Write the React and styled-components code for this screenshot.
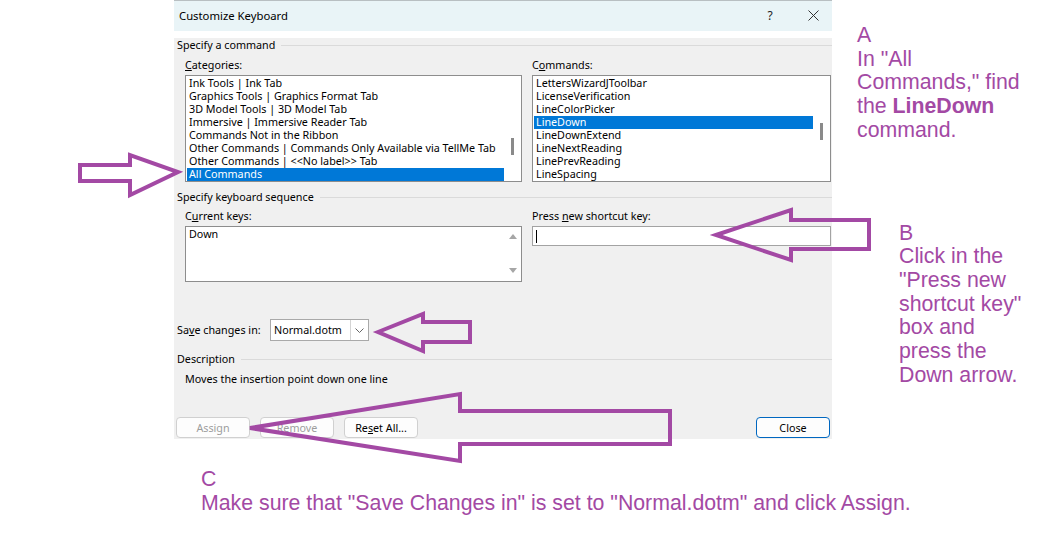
import React from "react";
import styled, { createGlobalStyle } from "styled-components";

const PURPLE = "#a349a4";

const GlobalStyle = createGlobalStyle`
  html, body {
    margin: 0;
    padding: 0;
    background: #fff;
  }
  body {
    font-family: "Noto Sans", "DejaVu Sans", sans-serif;
  }
`;

const Page = styled.div`
  position: relative;
  width: 1051px;
  height: 537px;
  overflow: hidden;
  background: #fff;
`;

const TopRow = styled.div`
  display: grid;
  grid-template-columns: 174px 658px 1fr;
`;

const Dialog = styled.div`
  grid-column: 2;
  font-size: 10.75px;
  color: #000;
  line-height: 14px;
`;

const TitleBar = styled.div`
  height: 31px;
  background: #e9f4f7;
  box-shadow: inset 0 1px 0 #b8bfc2;
  display: flex;
  align-items: center;
  padding-left: 5px;
  font-size: 11.3px;
`;

const Title = styled.span`
  flex: 1;
`;

const TitleButton = styled.span`
  width: 38px;
  height: 31px;
  display: flex;
  align-items: center;
  justify-content: center;
  font-size: 12px;
  color: #222;
  & + & {
    margin-left: 5px;
  }
`;

const Body = styled.div`
  background: #f0f0f0;
  padding: 0 0 1px 3px;
`;

const GroupHeader = styled.div`
  display: flex;
  align-items: center;
  gap: 6px;
  height: 14px;
  margin-top: ${({ $top }) => $top}px;

  &::after {
    content: "";
    flex: 1;
    height: 1px;
    background: #dadada;
  }
`;

const Columns = styled.div`
  display: grid;
  grid-template-columns: 337px 299px;
  column-gap: 10px;
  padding-left: 8px;
`;

const Field = styled.div`
  display: flex;
  flex-direction: column;
  gap: 3px;
  margin-top: ${({ $top }) => $top}px;
`;

const Label = styled.span`
  display: block;
  height: 14px;
  u {
    text-decoration: underline;
    text-underline-offset: 1px;
  }
`;

const ListBox = styled.div`
  box-sizing: border-box;
  height: ${({ $height }) => $height}px;
  border: 1px solid #8d8d8d;
  background: #fff;
  display: flex;
`;

const Items = styled.div`
  flex: 1;
  padding-top: 1px;
  padding-left: 1px;
`;

const Item = styled.div`
  height: 13px;
  line-height: 13px;
  padding-left: 2px;
  white-space: nowrap;
  background: ${({ $selected }) => ($selected ? "#0078d7" : "transparent")};
  color: ${({ $selected }) => ($selected ? "#fff" : "#000")};
`;

const Track = styled.div`
  width: 17px;
  display: flex;
  flex-direction: column;
  align-items: center;
  padding-top: ${({ $thumbTop }) => $thumbTop}px;
`;

const Thumb = styled.div`
  width: 3px;
  height: 17px;
  background: #8a8a8a;
`;

const SpinTrack = styled.div`
  width: 17px;
  display: flex;
  flex-direction: column;
  align-items: center;
  justify-content: space-between;
  padding: 7px 0 8px;
`;

const Triangle = styled.div`
  width: 0;
  height: 0;
  border-left: 4px solid transparent;
  border-right: 4px solid transparent;
  ${({ $down }) =>
    $down ? "border-top: 5px solid #a6a6a6;" : "border-bottom: 5px solid #a6a6a6;"}
`;

const TextInput = styled.div`
  box-sizing: border-box;
  height: 20px;
  border: 1px solid #a3a3a3;
  background: #fff;
  display: flex;
  align-items: center;
  padding-left: 3px;
`;

const Caret = styled.span`
  width: 1px;
  height: 13px;
  background: #000;
`;

const SaveRow = styled.div`
  display: flex;
  align-items: center;
  margin-top: 37px;
`;

const SaveLabel = styled(Label)`
  width: 93px;
`;

const Select = styled.div`
  box-sizing: border-box;
  width: 99px;
  height: 22px;
  border: 1px solid #a9a9a9;
  background: #fff;
  display: flex;
`;

const SelectValue = styled.span`
  flex: 1;
  padding-left: 3px;
  line-height: 20px;
`;

const SelectArrow = styled.span`
  width: 17px;
  border-left: 1px solid #d4d4d4;
  display: flex;
  align-items: center;
  justify-content: center;
`;

const DescriptionText = styled.div`
  margin-top: 6px;
  padding-left: 8px;
`;

const ButtonRow = styled.div`
  display: flex;
  gap: 10px;
  margin: 31px 0 0 -1px;
  padding-right: 2px;
`;

const Button = styled.div`
  box-sizing: border-box;
  width: 74px;
  height: 21px;
  border: 1px solid ${({ $primary }) => ($primary ? "#0067c0" : "#d0d0d0")};
  border-radius: 4px;
  background: #fdfdfd;
  color: ${({ $disabled }) => ($disabled ? "#9d9d9d" : "#000")};
  display: flex;
  align-items: center;
  justify-content: center;
  margin-left: ${({ $push }) => ($push ? "auto" : "0")};
  u {
    text-decoration: underline;
    text-underline-offset: 1px;
  }
`;

const Notes = styled.div`
  grid-column: 3;
  display: flex;
  flex-direction: column;
`;

const Note = styled.div`
  font-family: "Liberation Sans", Arial, sans-serif;
  font-size: 21.3px;
  line-height: 23.7px;
  color: ${PURPLE};
  margin-left: ${({ $left }) => $left}px;
  margin-top: ${({ $top }) => $top}px;
  white-space: nowrap;
  b {
    font-weight: bold;
  }
`;

const Overlay = styled.svg`
  position: absolute;
  left: 0;
  top: 0;
  pointer-events: none;
`;

const categories = [
  "Ink Tools | Ink Tab",
  "Graphics Tools | Graphics Format Tab",
  "3D Model Tools | 3D Model Tab",
  "Immersive | Immersive Reader Tab",
  "Commands Not in the Ribbon",
  "Other Commands | Commands Only Available via TellMe Tab",
  "Other Commands | <<No label>> Tab",
  "All Commands",
];

const commands = [
  "LettersWizardJToolbar",
  "LicenseVerification",
  "LineColorPicker",
  "LineDown",
  "LineDownExtend",
  "LineNextReading",
  "LinePrevReading",
  "LineSpacing",
];

const arrows = [
  "80,165 130,165 130,155 178,172 130,195 130,181 80,181",
  "716,235 791,210 791,220 869,220 869,249 791,249 791,260",
  "378,332 423,314 423,322 470,322 470,342 423,342 423,351",
  "250,428 460,394 460,411 670,411 670,444 460,444 460,461",
];

const Lines = ({ lines }) => lines.map((l, i) => <div key={i}>{l}</div>);

export default function App() {
  return (
    <Page>
      <GlobalStyle />
      <TopRow>
        <Dialog>
          <TitleBar>
            <Title>Customize Keyboard</Title>
            <TitleButton>?</TitleButton>
            <TitleButton>
              <svg width="11" height="11" viewBox="0 0 11 11">
                <path d="M0.5 0.5 L10.5 10.5 M10.5 0.5 L0.5 10.5" stroke="#333" strokeWidth="1" />
              </svg>
            </TitleButton>
          </TitleBar>
          <Body>
            <GroupHeader $top={7}>Specify a command</GroupHeader>
            <Columns>
              <Field $top={6}>
                <Label>
                  <u>C</u>ategories:
                </Label>
                <ListBox $height={107}>
                  <Items>
                    {categories.map((c) => (
                      <Item key={c} $selected={c === "All Commands"}>
                        {c}
                      </Item>
                    ))}
                  </Items>
                  <Track $thumbTop={62}>
                    <Thumb />
                  </Track>
                </ListBox>
              </Field>
              <Field $top={6}>
                <Label>
                  C<u>o</u>mmands:
                </Label>
                <ListBox $height={107}>
                  <Items>
                    {commands.map((c) => (
                      <Item key={c} $selected={c === "LineDown"}>
                        {c}
                      </Item>
                    ))}
                  </Items>
                  <Track $thumbTop={47}>
                    <Thumb />
                  </Track>
                </ListBox>
              </Field>
            </Columns>

            <GroupHeader $top={8}>Specify keyboard sequence</GroupHeader>
            <Columns>
              <Field $top={5}>
                <Label>
                  C<u>u</u>rrent keys:
                </Label>
                <ListBox $height={56}>
                  <Items>
                    <Item>Down</Item>
                  </Items>
                  <SpinTrack>
                    <Triangle />
                    <Triangle $down />
                  </SpinTrack>
                </ListBox>
              </Field>
              <Field $top={5}>
                <Label>
                  Press <u>n</u>ew shortcut key:
                </Label>
                <TextInput>
                  <Caret />
                </TextInput>
              </Field>
            </Columns>

            <SaveRow>
              <SaveLabel>
                Sa<u>v</u>e changes in:
              </SaveLabel>
              <Select>
                <SelectValue>Normal.dotm</SelectValue>
                <SelectArrow>
                  <svg width="9" height="5" viewBox="0 0 9 5">
                    <path d="M0.5 0.5 L4.5 4.5 L8.5 0.5" fill="none" stroke="#666" strokeWidth="1" />
                  </svg>
                </SelectArrow>
              </Select>
            </SaveRow>

            <GroupHeader $top={11}>Description</GroupHeader>
            <DescriptionText>Moves the insertion point down one line</DescriptionText>

            <ButtonRow>
              <Button $disabled>Assign</Button>
              <Button $disabled>Remove</Button>
              <Button>
                Re<u>s</u>et All...
              </Button>
              <Button $primary $push>
                Close
              </Button>
            </ButtonRow>
          </Body>
        </Dialog>

        <Notes>
          <Note $left={25} $top={24}>
            <div>A</div>
            <div>In "All</div>
            <div>Commands," find</div>
            <div>
              the <b>LineDown</b>
            </div>
            <div>command.</div>
          </Note>
          <Note $left={67} $top={79}>
            <Lines
              lines={[
                "B",
                "Click in the",
                '"Press new',
                'shortcut key"',
                "box and",
                "press the",
                "Down arrow.",
              ]}
            />
          </Note>
        </Notes>
      </TopRow>

      <Note $left={201} $top={29}>
        <Lines
          lines={[
            "C",
            'Make sure that "Save Changes in" is set to "Normal.dotm" and click Assign.',
          ]}
        />
      </Note>

      <Overlay width="1051" height="537" viewBox="0 0 1051 537">
        {arrows.map((pts, i) => (
          <polygon
            key={i}
            points={pts}
            fill="none"
            stroke={PURPLE}
            strokeWidth="4"
            strokeLinejoin="miter"
          />
        ))}
      </Overlay>
    </Page>
  );
}
